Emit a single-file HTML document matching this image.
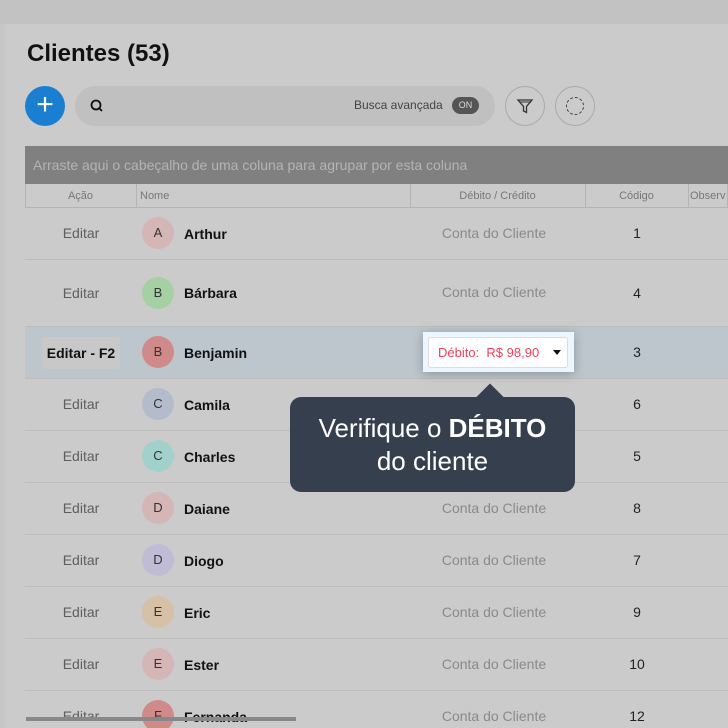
<!DOCTYPE html><html><head><style>
*{margin:0;padding:0;box-sizing:border-box}
html,body{width:728px;height:728px;overflow:hidden}
body{background:#c2c2c2;font-family:"Liberation Sans",sans-serif;position:relative}
.abs{position:absolute}
.panel{left:5px;top:24px;width:723px;height:704px;background:#cbcbcb}
.row{position:absolute;left:25px;width:703px;border-bottom:1px solid #bdbdbd}
.t{position:absolute;white-space:nowrap}
.ed{font-size:14px;color:#5e5e5e;width:112px;text-align:center;left:25px}
.av{position:absolute;left:142px;width:32px;height:32px;border-radius:50%;font-size:13px;color:#333;text-align:center;line-height:32px}
.nm{left:184px;font-size:14px;font-weight:bold;color:#111}
.cc{left:410px;width:168px;text-align:center;font-size:14px;color:#8a8a8a}
.cd{left:590px;width:94px;text-align:center;font-size:14px;color:#222}
</style></head><body>
<div class="abs" style="left:0;top:24px;width:5px;height:704px;background:#c6c6c6"></div>
<div class="abs panel"></div>
<div class="t" style="left:27px;top:40px;font-size:24px;font-weight:bold;color:#111">Clientes (53)</div>
<div class="abs" style="left:25px;top:86px;width:40px;height:40px;border-radius:50%;background:#1a7fd0;color:#fff;font-size:30px;text-align:center;line-height:38px">+</div>
<div class="abs" style="left:75px;top:86px;width:420px;height:40px;border-radius:20px;background:#c0c0c0"></div>
<svg class="abs" style="left:89px;top:98px" width="16" height="16"><circle cx="7" cy="7" r="4.5" fill="none" stroke="#111" stroke-width="1.8"/><line x1="10.3" y1="10.3" x2="13" y2="13" stroke="#111" stroke-width="1.8"/></svg>
<div class="t" style="left:354px;top:98px;font-size:12px;color:#444">Busca avançada</div>
<div class="abs" style="left:452px;top:97px;width:27px;height:17px;border-radius:9px;background:#555;color:#ddd;font-size:9px;text-align:center;line-height:17px">ON</div>
<div class="abs" style="left:505px;top:86px;width:40px;height:40px;border-radius:50%;border:1px solid #aaa"></div>
<svg class="abs" style="left:515px;top:96px" width="20" height="20"><path d="M3 4h14l-5.5 6.5v6l-3-1.5v-4.5z" fill="none" stroke="#333" stroke-width="1.3"/><line x1="4" y1="6" x2="16" y2="6" stroke="#333" stroke-width="1"/></svg>
<div class="abs" style="left:555px;top:86px;width:40px;height:40px;border-radius:50%;border:1px solid #aaa"></div>
<div class="abs" style="left:566px;top:97px;width:18px;height:18px;border-radius:50%;border:1px dashed #444"></div>
<div class="abs" style="left:25px;top:146px;width:703px;height:38px;background:#808080"></div>
<div class="t" style="left:33px;top:157px;font-size:14px;color:#b4b4b4">Arraste aqui o cabeçalho de uma coluna para agrupar por esta coluna</div>
<div class="abs" style="left:25px;top:184px;width:703px;height:24px;border:1px solid #b4b4b4;border-top:none"></div>
<div class="abs" style="left:136px;top:184px;width:1px;height:24px;background:#b4b4b4"></div>
<div class="abs" style="left:410px;top:184px;width:1px;height:24px;background:#b4b4b4"></div>
<div class="abs" style="left:585px;top:184px;width:1px;height:24px;background:#b4b4b4"></div>
<div class="abs" style="left:688px;top:184px;width:1px;height:24px;background:#b4b4b4"></div>
<div class="t" style="left:25px;width:111px;text-align:center;top:190px;font-size:11px;color:#777">Ação</div>
<div class="t" style="left:140px;top:190px;font-size:11px;color:#777">Nome</div>
<div class="t" style="left:410px;width:175px;text-align:center;top:190px;font-size:11px;color:#777">Débito / Crédito</div>
<div class="t" style="left:585px;width:103px;text-align:center;top:190px;font-size:11px;color:#777">Código</div>
<div class="t" style="left:690px;top:190px;font-size:11px;color:#777">Observ</div>

<div class="row" style="top:208px;height:52px"></div>
<div class="row" style="top:260px;height:67px"></div>
<div class="row" style="top:327px;height:52px;background:#bcc6cc"></div>
<div class="row" style="top:379px;height:52px"></div>
<div class="row" style="top:431px;height:52px"></div>
<div class="row" style="top:483px;height:52px"></div>
<div class="row" style="top:535px;height:52px"></div>
<div class="row" style="top:587px;height:52px"></div>
<div class="row" style="top:639px;height:52px"></div>

<div class="t ed" style="top:225px">Editar</div><div class="av" style="top:217px;background:#d4b6b6">A</div><div class="t nm" style="top:226px">Arthur</div><div class="t cc" style="top:225px">Conta do Cliente</div><div class="t cd" style="top:225px">1</div>
<div class="t ed" style="top:285px">Editar</div><div class="av" style="top:277px;background:#a4d0a4">B</div><div class="t nm" style="top:285px">Bárbara</div><div class="t cc" style="top:284px">Conta do Cliente</div><div class="t cd" style="top:285px">4</div>
<div class="abs" style="left:42px;top:337px;width:78px;height:32px;border-radius:3px;background:#c8c8c8"></div>
<div class="t" style="left:42px;width:78px;text-align:center;top:345px;font-size:14px;font-weight:bold;color:#111">Editar - F2</div>
<div class="av" style="top:336px;background:#d08a8a">B</div><div class="t nm" style="top:345px">Benjamin</div>
<div class="t cd" style="top:344px">3</div>
<div class="t ed" style="top:396px">Editar</div><div class="av" style="top:388px;background:#b4bccc">C</div><div class="t nm" style="top:397px">Camila</div><div class="t cd" style="top:396px">6</div>
<div class="t ed" style="top:448px">Editar</div><div class="av" style="top:440px;background:#a2d0ca">C</div><div class="t nm" style="top:449px">Charles</div><div class="t cd" style="top:448px">5</div>
<div class="t ed" style="top:500px">Editar</div><div class="av" style="top:492px;background:#d4b6b6">D</div><div class="t nm" style="top:501px">Daiane</div><div class="t cc" style="top:500px">Conta do Cliente</div><div class="t cd" style="top:500px">8</div>
<div class="t ed" style="top:552px">Editar</div><div class="av" style="top:544px;background:#c0bcd6">D</div><div class="t nm" style="top:553px">Diogo</div><div class="t cc" style="top:552px">Conta do Cliente</div><div class="t cd" style="top:552px">7</div>
<div class="t ed" style="top:604px">Editar</div><div class="av" style="top:596px;background:#d6c0a6">E</div><div class="t nm" style="top:605px">Eric</div><div class="t cc" style="top:604px">Conta do Cliente</div><div class="t cd" style="top:604px">9</div>
<div class="t ed" style="top:656px">Editar</div><div class="av" style="top:648px;background:#d4b6b6">E</div><div class="t nm" style="top:657px">Ester</div><div class="t cc" style="top:656px">Conta do Cliente</div><div class="t cd" style="top:656px">10</div>
<div class="t ed" style="top:708px">Editar</div><div class="av" style="top:700px;background:#d08a8a">F</div><div class="t nm" style="top:709px">Fernanda</div><div class="t cc" style="top:708px">Conta do Cliente</div><div class="t cd" style="top:708px">12</div>
<div class="abs" style="left:26px;top:717px;width:270px;height:4px;background:#888"></div>

<div class="abs" style="left:423px;top:332px;width:151px;height:40px;background:#eef6fd;box-shadow:0 2px 10px rgba(0,0,0,.25)"></div>
<div class="abs" style="left:428px;top:337px;width:140px;height:31px;background:#fff;border:1px solid #ddd;border-radius:3px"></div>
<div class="t" style="left:438px;top:345px;font-size:13px;color:#f0405a">Débito:&nbsp; R$ 98,90</div>
<div class="abs" style="left:553px;top:350px;border-left:4px solid transparent;border-right:4px solid transparent;border-top:5px solid #111"></div>

<div class="abs" style="left:479px;top:388px;width:22px;height:22px;background:#363f4e;transform:rotate(45deg)"></div>
<div class="abs" style="left:290px;top:397px;width:285px;height:95px;background:#363f4e;border-radius:11px"></div>
<div class="t" style="left:290px;width:285px;text-align:center;top:412px;font-size:26px;line-height:33px;color:#fff">Verifique o <b>DÉBITO</b><br>do cliente</div>
</body></html>
